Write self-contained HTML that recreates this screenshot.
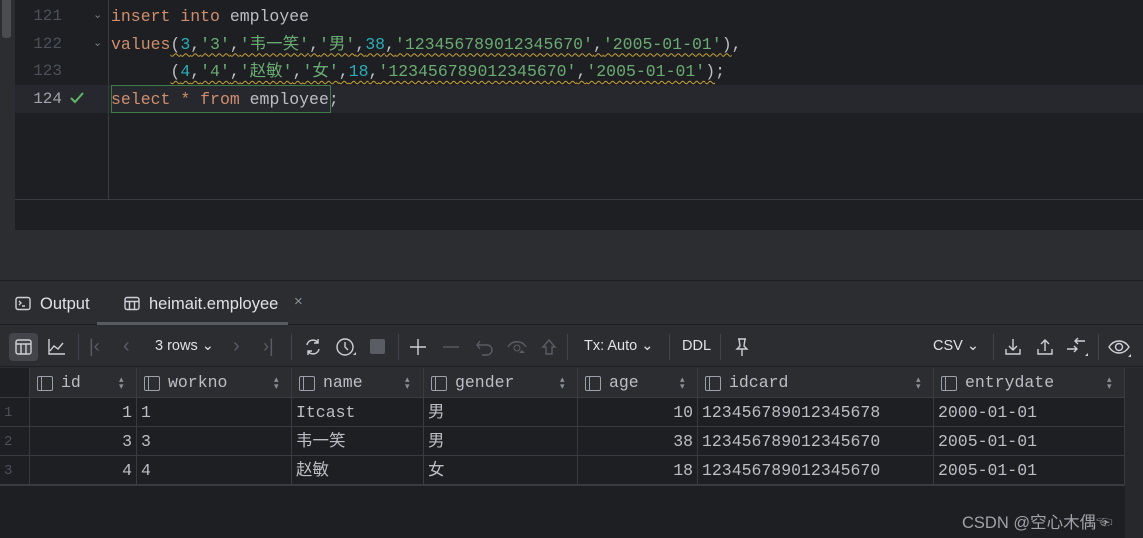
<!DOCTYPE html>
<html><head><meta charset="utf-8"><style>
*{margin:0;padding:0;box-sizing:border-box}
body{width:1143px;height:538px;overflow:hidden;background:#1e1f22;position:relative;font-family:"Liberation Sans","Noto Sans CJK SC",sans-serif;color:#dfe1e5}
.a{position:absolute}
.mono{font-family:"Liberation Mono","Noto Sans CJK SC",monospace}
.code{font-size:16.5px;white-space:pre;color:#bcbec4;line-height:27.5px}
.k{color:#cf8e6d}.s{color:#6aab73}.n{color:#2aacb8}
.w{text-decoration:underline wavy #c9a33a;text-underline-offset:4px;text-decoration-thickness:1px}
.ln{color:#4b5059;font-size:16px;width:62px;text-align:right;font-family:"Liberation Mono",monospace}
.ic{stroke:#ced0d6;fill:none;stroke-width:1.4}
.sep{position:absolute;top:334px;width:1px;height:26px;background:#43454a}
.th{position:absolute;top:368px;height:30px;border-right:1px solid #393b40;background:#2b2d30;font-family:"Liberation Mono",monospace;font-size:16.5px;color:#bcbec4;line-height:30px;padding-left:31px}
.th::before{content:"";position:absolute;left:7px;top:8px;width:14px;height:13px;border:1.3px solid #9da0a8;border-radius:2px}
.th::after{content:"";position:absolute;left:11px;top:9px;width:1.3px;height:13px;background:#9da0a8}
.td{position:absolute;height:29px;border-right:1px solid #393b40;border-bottom:1px solid #393b40;font-family:"Liberation Mono","Noto Sans CJK SC",monospace;font-size:16.5px;color:#bcbec4;line-height:30px;padding:0 4px}
.r{text-align:right}
.ar{position:absolute;top:376px;color:#8c8f96;font-size:9px;line-height:7px}
</style></head><body>
<div class="a" style="left:0;top:0;width:15px;height:230px;background:#2b2d30"></div>
<div class="a" style="left:2px;top:0;width:9px;height:38px;background:#4a4c50;border-radius:0 0 3px 3px"></div>
<div class="a" style="left:15px;top:85px;width:1128px;height:28px;background:#26282e"></div>
<div class="a" style="left:108px;top:0;width:1px;height:199px;background:#393b40"></div>
<div class="a" style="left:15px;top:199px;width:1128px;height:1px;background:#393b40"></div>
<div class="a ln" style="left:0;top:6px;line-height:20px">121</div>
<div class="a ln" style="left:0;top:34px;line-height:20px">122</div>
<div class="a ln" style="left:0;top:61px;line-height:20px">123</div>
<div class="a ln" style="left:0;top:89px;line-height:20px;color:#a1a3ab">124</div>
<div class="a" style="left:93px;top:8px;color:#7a7e85;font-size:11px">⌄</div>
<div class="a" style="left:93px;top:36px;color:#7a7e85;font-size:11px">⌄</div>
<svg class="a" style="left:69px;top:91px" width="16" height="14"><path d="M2 7 L6 11 L14 2" stroke="#5fb865" stroke-width="2" fill="none"/></svg>
<div class="a mono code" style="left:111px;top:3px"><span class="k">insert into</span> employee
<span class="k">values</span><span class="w">(<span class="n">3</span>,<span class="s">'3'</span>,<span class="s">'韦一笑'</span>,<span class="s">'男'</span>,<span class="n">38</span>,<span class="s">'123456789012345670'</span>,<span class="s">'2005-01-01'</span>)</span>,
      <span class="w">(<span class="n">4</span>,<span class="s">'4'</span>,<span class="s">'赵敏'</span>,<span class="s">'女'</span>,<span class="n">18</span>,<span class="s">'123456789012345670'</span>,<span class="s">'2005-01-01'</span>)</span>;
<span class="k">select</span> <span class="k">*</span> <span class="k">from</span> employee;</div>
<div class="a" style="left:111px;top:85px;width:220px;height:28px;border:1px solid #3d7a45"></div>
<div class="a" style="left:0;top:230px;width:1143px;height:138px;background:#2b2d30"></div>
<div class="a" style="left:0;top:280px;width:1143px;height:1px;background:#1e1f22"></div>
<div class="a" style="left:0;top:324px;width:1143px;height:1px;background:#1e1f22"></div>
<svg class="a" style="left:15px;top:296px" width="16" height="16"><rect x="1" y="1.5" width="14" height="12" rx="2" class="ic"/><path d="M4 5l2 2-2 2M7 10h3" class="ic"/></svg>
<div class="a" style="left:40px;top:295px;font-size:16.5px;color:#dfe1e5">Output</div>
<svg class="a" style="left:124px;top:296px" width="16" height="16"><rect x="1" y="1.5" width="14" height="12" rx="2" class="ic"/><path d="M1 5.5h14M5.5 5.5v8M10.5 5.5v8" class="ic"/></svg>
<div class="a" style="left:149px;top:295px;font-size:16.5px;color:#dfe1e5">heimait.employee</div>
<div class="a" style="left:294px;top:293px;font-size:15px;color:#8c8f96">×</div>
<div class="a" style="left:97px;top:322px;width:191px;height:3px;background:#585b60"></div>
<div class="a" style="left:9px;top:333px;width:29px;height:28px;background:#43454a;border-radius:4px"></div>
<svg class="a" style="left:15px;top:339px" width="18" height="16"><rect x="1" y="1" width="15" height="14" rx="2" class="ic"/><path d="M1 5h15M6 5v10M11 5v10" class="ic"/></svg>
<svg class="a" style="left:47px;top:338px" width="20" height="18"><path d="M2 1v15h16M3 13l4-5 4 3 5-6" class="ic"/></svg>
<div class="sep" style="left:78px"></div>
<div class="a" style="left:89px;top:336px;color:#5a5d63;font-size:18px">|‹</div>
<div class="a" style="left:123px;top:335px;color:#5a5d63;font-size:20px">‹</div>
<div class="a" style="left:155px;top:338px;font-size:14.5px;color:#dfe1e5">3 rows ⌄</div>
<div class="a" style="left:233px;top:335px;color:#5a5d63;font-size:20px">›</div>
<div class="a" style="left:263px;top:336px;color:#5a5d63;font-size:18px">›|</div>
<div class="sep" style="left:291px"></div>
<svg class="a" style="left:303px;top:337px" width="20" height="20"><path d="M4 8a6 6 0 0 1 11-2M16 12a6 6 0 0 1-11 2M15 2v4h-4M5 18v-4h4" class="ic"/></svg>
<svg class="a" style="left:335px;top:337px" width="22" height="22"><circle cx="10" cy="10" r="8" class="ic"/><path d="M10 5v5l3 3" class="ic"/><path d="M18 18h3v-3z" fill="#ced0d6"/></svg>
<div class="a" style="left:370px;top:339px;width:15px;height:15px;background:#5a5d63;border-radius:2px"></div>
<div class="sep" style="left:398px"></div>
<svg class="a" style="left:409px;top:338px" width="18" height="18"><path d="M9 1v16M1 9h16" class="ic"/></svg>
<svg class="a" style="left:442px;top:338px" width="18" height="18"><path d="M1 9h16" stroke="#5a5d63" stroke-width="1.4"/></svg>
<svg class="a" style="left:475px;top:338px" width="20" height="18"><path d="M5 3L2 7l3 4M2 7h10a5 5 0 0 1 0 10H7" stroke="#5a5d63" fill="none" stroke-width="1.4"/></svg>
<svg class="a" style="left:507px;top:338px" width="22" height="20"><path d="M1 9c4-7 14-7 18 0" stroke="#5a5d63" fill="none" stroke-width="1.4"/><circle cx="10" cy="10" r="3" stroke="#5a5d63" fill="none"/><path d="M15 18v-6l-3 3h6l-3-3" fill="#5a5d63"/></svg>
<svg class="a" style="left:540px;top:338px" width="18" height="18"><path d="M9 2L3 9h3v7h6V9h3z" stroke="#5a5d63" fill="none" stroke-width="1.4"/></svg>
<div class="sep" style="left:567px"></div>
<div class="a" style="left:584px;top:338px;font-size:14.5px;color:#dfe1e5">Tx: Auto ⌄</div>
<div class="sep" style="left:669px"></div>
<div class="a" style="left:682px;top:338px;font-size:14.5px;color:#dfe1e5">DDL</div>
<div class="sep" style="left:720px"></div>
<svg class="a" style="left:734px;top:337px" width="16" height="20"><path d="M4 2h8M5 2l1 7-3 3h10l-3-3 1-7M8 12v7" class="ic"/></svg>
<div class="a" style="left:933px;top:338px;font-size:14.5px;color:#dfe1e5">CSV ⌄</div>
<div class="sep" style="left:993px"></div>
<svg class="a" style="left:1004px;top:337px" width="18" height="20"><path d="M9 2v11M5 9l4 4 4-4M2 12v5h14v-5" class="ic"/></svg>
<svg class="a" style="left:1036px;top:337px" width="18" height="20"><path d="M9 14V3M5 7l4-4 4 4M2 12v5h14v-5" class="ic"/></svg>
<svg class="a" style="left:1066px;top:336px" width="22" height="22"><path d="M19 5H9M12 2L9 5l3 3M1 13h10M8 10l3 3-3 3" class="ic"/><path d="M19 20h3v-3z" fill="#ced0d6"/></svg>
<div class="sep" style="left:1098px"></div>
<svg class="a" style="left:1108px;top:337px" width="24" height="22"><path d="M1 10c5-8 15-8 20 0-5 8-15 8-20 0z" class="ic"/><circle cx="11" cy="10" r="3.5" class="ic"/><path d="M20 20h3v-3z" fill="#ced0d6"/></svg>
<div class="a" style="left:0;top:366px;width:1143px;height:1px;background:#1e1f22"></div>
<div class="a" style="left:0;top:368px;width:30px;height:117px;background:#1e1f22;border-right:1px solid #393b40"></div>
<div class="th" style="left:30px;width:107px">id</div>
<div class="th" style="left:137px;width:155px">workno</div>
<div class="th" style="left:292px;width:132px">name</div>
<div class="th" style="left:424px;width:154px">gender</div>
<div class="th" style="left:578px;width:120px">age</div>
<div class="th" style="left:698px;width:236px">idcard</div>
<div class="th" style="left:934px;width:191px">entrydate</div>
<div class="ar" style="left:119px">▴<br>▾</div>
<div class="ar" style="left:274px">▴<br>▾</div>
<div class="ar" style="left:405px">▴<br>▾</div>
<div class="ar" style="left:560px">▴<br>▾</div>
<div class="ar" style="left:680px">▴<br>▾</div>
<div class="ar" style="left:916px">▴<br>▾</div>
<div class="ar" style="left:1107px">▴<br>▾</div>
<div class="a" style="left:0;top:397px;width:1125px;height:1px;background:#393b40"></div>

<div class="td" style="left:0;top:398px;width:30px;color:#4b5059;font-size:14px">1</div>
<div class="td r" style="left:30px;top:398px;width:107px">1</div>
<div class="td" style="left:137px;top:398px;width:155px">1</div>
<div class="td" style="left:292px;top:398px;width:132px">Itcast</div>
<div class="td" style="left:424px;top:398px;width:154px">男</div>
<div class="td r" style="left:578px;top:398px;width:120px">10</div>
<div class="td" style="left:698px;top:398px;width:236px">123456789012345678</div>
<div class="td" style="left:934px;top:398px;width:191px">2000-01-01</div>

<div class="td" style="left:0;top:427px;width:30px;color:#4b5059;font-size:14px">2</div>
<div class="td r" style="left:30px;top:427px;width:107px">3</div>
<div class="td" style="left:137px;top:427px;width:155px">3</div>
<div class="td" style="left:292px;top:427px;width:132px">韦一笑</div>
<div class="td" style="left:424px;top:427px;width:154px">男</div>
<div class="td r" style="left:578px;top:427px;width:120px">38</div>
<div class="td" style="left:698px;top:427px;width:236px">123456789012345670</div>
<div class="td" style="left:934px;top:427px;width:191px">2005-01-01</div>

<div class="td" style="left:0;top:456px;width:30px;color:#4b5059;font-size:14px">3</div>
<div class="td r" style="left:30px;top:456px;width:107px">4</div>
<div class="td" style="left:137px;top:456px;width:155px">4</div>
<div class="td" style="left:292px;top:456px;width:132px">赵敏</div>
<div class="td" style="left:424px;top:456px;width:154px">女</div>
<div class="td r" style="left:578px;top:456px;width:120px">18</div>
<div class="td" style="left:698px;top:456px;width:236px">123456789012345670</div>
<div class="td" style="left:934px;top:456px;width:191px">2005-01-01</div>
<div class="a" style="left:0;top:484px;width:1125px;height:2px;background:#393b40"></div>
<div class="a" style="left:1125px;top:368px;width:18px;height:170px;background:#26282b"></div>
<div class="a" style="left:962px;top:509px;font-size:16.5px;color:#a0a2a8">CSDN @空心木偶☜</div>
</body></html>
